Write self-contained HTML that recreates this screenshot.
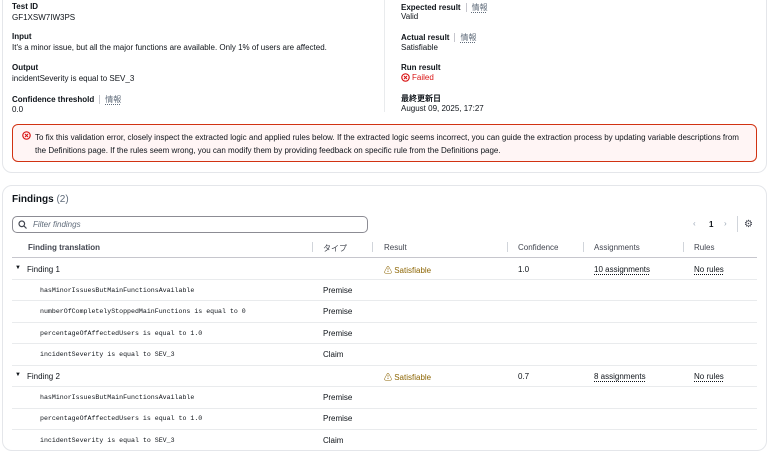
<!DOCTYPE html>
<html><head><meta charset="utf-8"><style>
*{margin:0;padding:0;box-sizing:border-box}
body{width:768px;height:452px;overflow:hidden;background:#fff;font-family:"Liberation Sans","Noto Sans CJK JP",sans-serif;font-size:8px;color:#0f141a;position:relative}
.a{position:absolute;white-space:nowrap}
.b{font-weight:bold}
.card{position:absolute;border:1px solid #e4e6ea;border-radius:10px;background:#fff}
.info{color:#5f6b7a;border-left:1px solid #c6c6cd;padding-left:5px;margin-left:5px;font-weight:normal;text-decoration:underline dotted;text-underline-offset:2px}
.m{font-family:"Liberation Mono",monospace;font-size:6.6px}
.hl{position:absolute;left:12px;width:745px;height:1px;background:#e9ebed}
.sep{position:absolute;top:242px;width:1px;height:10px;background:#d1d5db}
.dot{text-decoration:underline dotted;text-underline-offset:2px}
.sat{color:#8d6605}
</style></head><body>
<div class="card" style="left:2px;top:-12px;width:765px;height:185px;"></div>
<div class="a" style="left:384px;top:0;width:1px;height:112px;background:#e9ebed"></div>

<div class="a b" style="left:12px;top:2px">Test ID</div>
<div class="a" style="left:12px;top:13px">GF1XSW7IW3PS</div>
<div class="a b" style="left:12px;top:32px">Input</div>
<div class="a" style="left:12px;top:43px">It's a minor issue, but all the major functions are available. Only 1% of users are affected.</div>
<div class="a b" style="left:12px;top:63px">Output</div>
<div class="a" style="left:12px;top:74px">incidentSeverity is equal to SEV_3</div>
<div class="a b" style="left:12px;top:94px">Confidence threshold<span class="info">情報</span></div>
<div class="a" style="left:12px;top:105px">0.0</div>

<div class="a b" style="left:401px;top:2px">Expected result<span class="info">情報</span></div>
<div class="a" style="left:401px;top:12px">Valid</div>
<div class="a b" style="left:401px;top:32px">Actual result<span class="info">情報</span></div>
<div class="a" style="left:401px;top:43px">Satisfiable</div>
<div class="a b" style="left:401px;top:63px">Run result</div>
<svg class="a" style="left:401px;top:73px" width="9" height="9" viewBox="0 0 9 9"><circle cx="4.5" cy="4.5" r="3.7" fill="none" stroke="#d91515" stroke-width="1.2"/><path d="M3 3l3 3M6 3l-3 3" stroke="#d91515" stroke-width="1.1"/></svg>
<div class="a" style="left:412px;top:73px;color:#d91515">Failed</div>
<div class="a b" style="left:401px;top:93px">最終更新日</div>
<div class="a" style="left:401px;top:104px">August 09, 2025, 17:27</div>

<div class="a" style="left:12px;top:124px;width:745px;height:38px;background:#fff5f5;border:1px solid #d13212;border-radius:6px"></div>
<svg class="a" style="left:22px;top:131px" width="9" height="9" viewBox="0 0 9 9"><circle cx="4.5" cy="4.5" r="3.7" fill="none" stroke="#d91515" stroke-width="1.2"/><path d="M3 3l3 3M6 3l-3 3" stroke="#d91515" stroke-width="1.1"/></svg>
<div class="a" style="left:35px;top:131px;line-height:13px">To fix this validation error, closely inspect the extracted logic and applied rules below. If the extracted logic seems incorrect, you can guide the extraction process by updating variable descriptions from<br>the Definitions page. If the rules seem wrong, you can modify them by providing feedback on specific rule from the Definitions page.</div>

<div class="card" style="left:2px;top:185px;width:765px;height:266px;"></div>
<div class="a b" style="left:12px;top:194px;font-size:10px">Findings <span style="font-weight:normal;color:#5f6b7a">(2)</span></div>
<div class="a" style="left:12px;top:216px;width:356px;height:17px;border:1px solid #8c8c94;border-radius:5px"></div>
<svg class="a" style="left:18px;top:220px" width="9" height="9" viewBox="0 0 9 9"><circle cx="3.8" cy="3.8" r="2.8" fill="none" stroke="#424650" stroke-width="1.2"/><path d="M6 6l2.5 2.5" stroke="#424650" stroke-width="1.2"/></svg>
<div class="a" style="left:33px;top:220px;font-style:italic;color:#5f6b7a">Filter findings</div>
<div class="a" style="left:693px;top:219px;color:#9ba7b6">‹</div>
<div class="a b" style="left:709px;top:220px">1</div>
<div class="a" style="left:724px;top:219px;color:#9ba7b6">›</div>
<div class="a" style="left:737px;top:216px;width:1px;height:16px;background:#d1d5db"></div>
<div class="a" style="left:744px;top:219px;font-size:10px;color:#424650">⚙</div>

<div class="a b" style="left:28px;top:243px;color:#424650">Finding translation</div>
<div class="sep" style="left:312px"></div><div class="a" style="left:323px;top:243px;color:#424650">タイプ</div>
<div class="sep" style="left:372px"></div><div class="a" style="left:384px;top:243px;color:#424650">Result</div>
<div class="sep" style="left:507px"></div><div class="a" style="left:518px;top:243px;color:#424650">Confidence</div>
<div class="sep" style="left:583px"></div><div class="a" style="left:594px;top:243px;color:#424650">Assignments</div>
<div class="sep" style="left:683px"></div><div class="a" style="left:694px;top:243px;color:#424650">Rules</div>
<div class="hl" style="top:257px;background:#c6c6cd"></div>

<div class="a" style="left:15px;top:265px;font-size:6px">▼</div><div class="a" style="left:27px;top:265px">Finding 1</div>
<div class="a sat" style="left:384px;top:265px">⚠ Satisfiable</div>
<div class="a" style="left:518px;top:265px">1.0</div>
<div class="a dot" style="left:594px;top:265px">10 assignments</div>
<div class="a dot" style="left:694px;top:265px">No rules</div>
<div class="hl" style="top:279px"></div>
<div class="a m" style="left:40px;top:287px">hasMinorIssuesButMainFunctionsAvailable</div><div class="a" style="left:323px;top:286px">Premise</div>
<div class="hl" style="top:300px"></div>
<div class="a m" style="left:40px;top:308px">numberOfCompletelyStoppedMainFunctions is equal to 0</div><div class="a" style="left:323px;top:307px">Premise</div>
<div class="hl" style="top:322px"></div>
<div class="a m" style="left:40px;top:330px">percentageOfAffectedUsers is equal to 1.0</div><div class="a" style="left:323px;top:329px">Premise</div>
<div class="hl" style="top:343px"></div>
<div class="a m" style="left:40px;top:351px">incidentSeverity is equal to SEV_3</div><div class="a" style="left:323px;top:350px">Claim</div>
<div class="hl" style="top:365px"></div>

<div class="a" style="left:15px;top:372px;font-size:6px">▼</div><div class="a" style="left:27px;top:372px">Finding 2</div>
<div class="a sat" style="left:384px;top:372px">⚠ Satisfiable</div>
<div class="a" style="left:518px;top:372px">0.7</div>
<div class="a dot" style="left:594px;top:372px">8 assignments</div>
<div class="a dot" style="left:694px;top:372px">No rules</div>
<div class="hl" style="top:386px"></div>
<div class="a m" style="left:40px;top:394px">hasMinorIssuesButMainFunctionsAvailable</div><div class="a" style="left:323px;top:393px">Premise</div>
<div class="hl" style="top:408px"></div>
<div class="a m" style="left:40px;top:415px">percentageOfAffectedUsers is equal to 1.0</div><div class="a" style="left:323px;top:414px">Premise</div>
<div class="hl" style="top:429px"></div>
<div class="a m" style="left:40px;top:437px">incidentSeverity is equal to SEV_3</div><div class="a" style="left:323px;top:436px">Claim</div>
</body></html>
